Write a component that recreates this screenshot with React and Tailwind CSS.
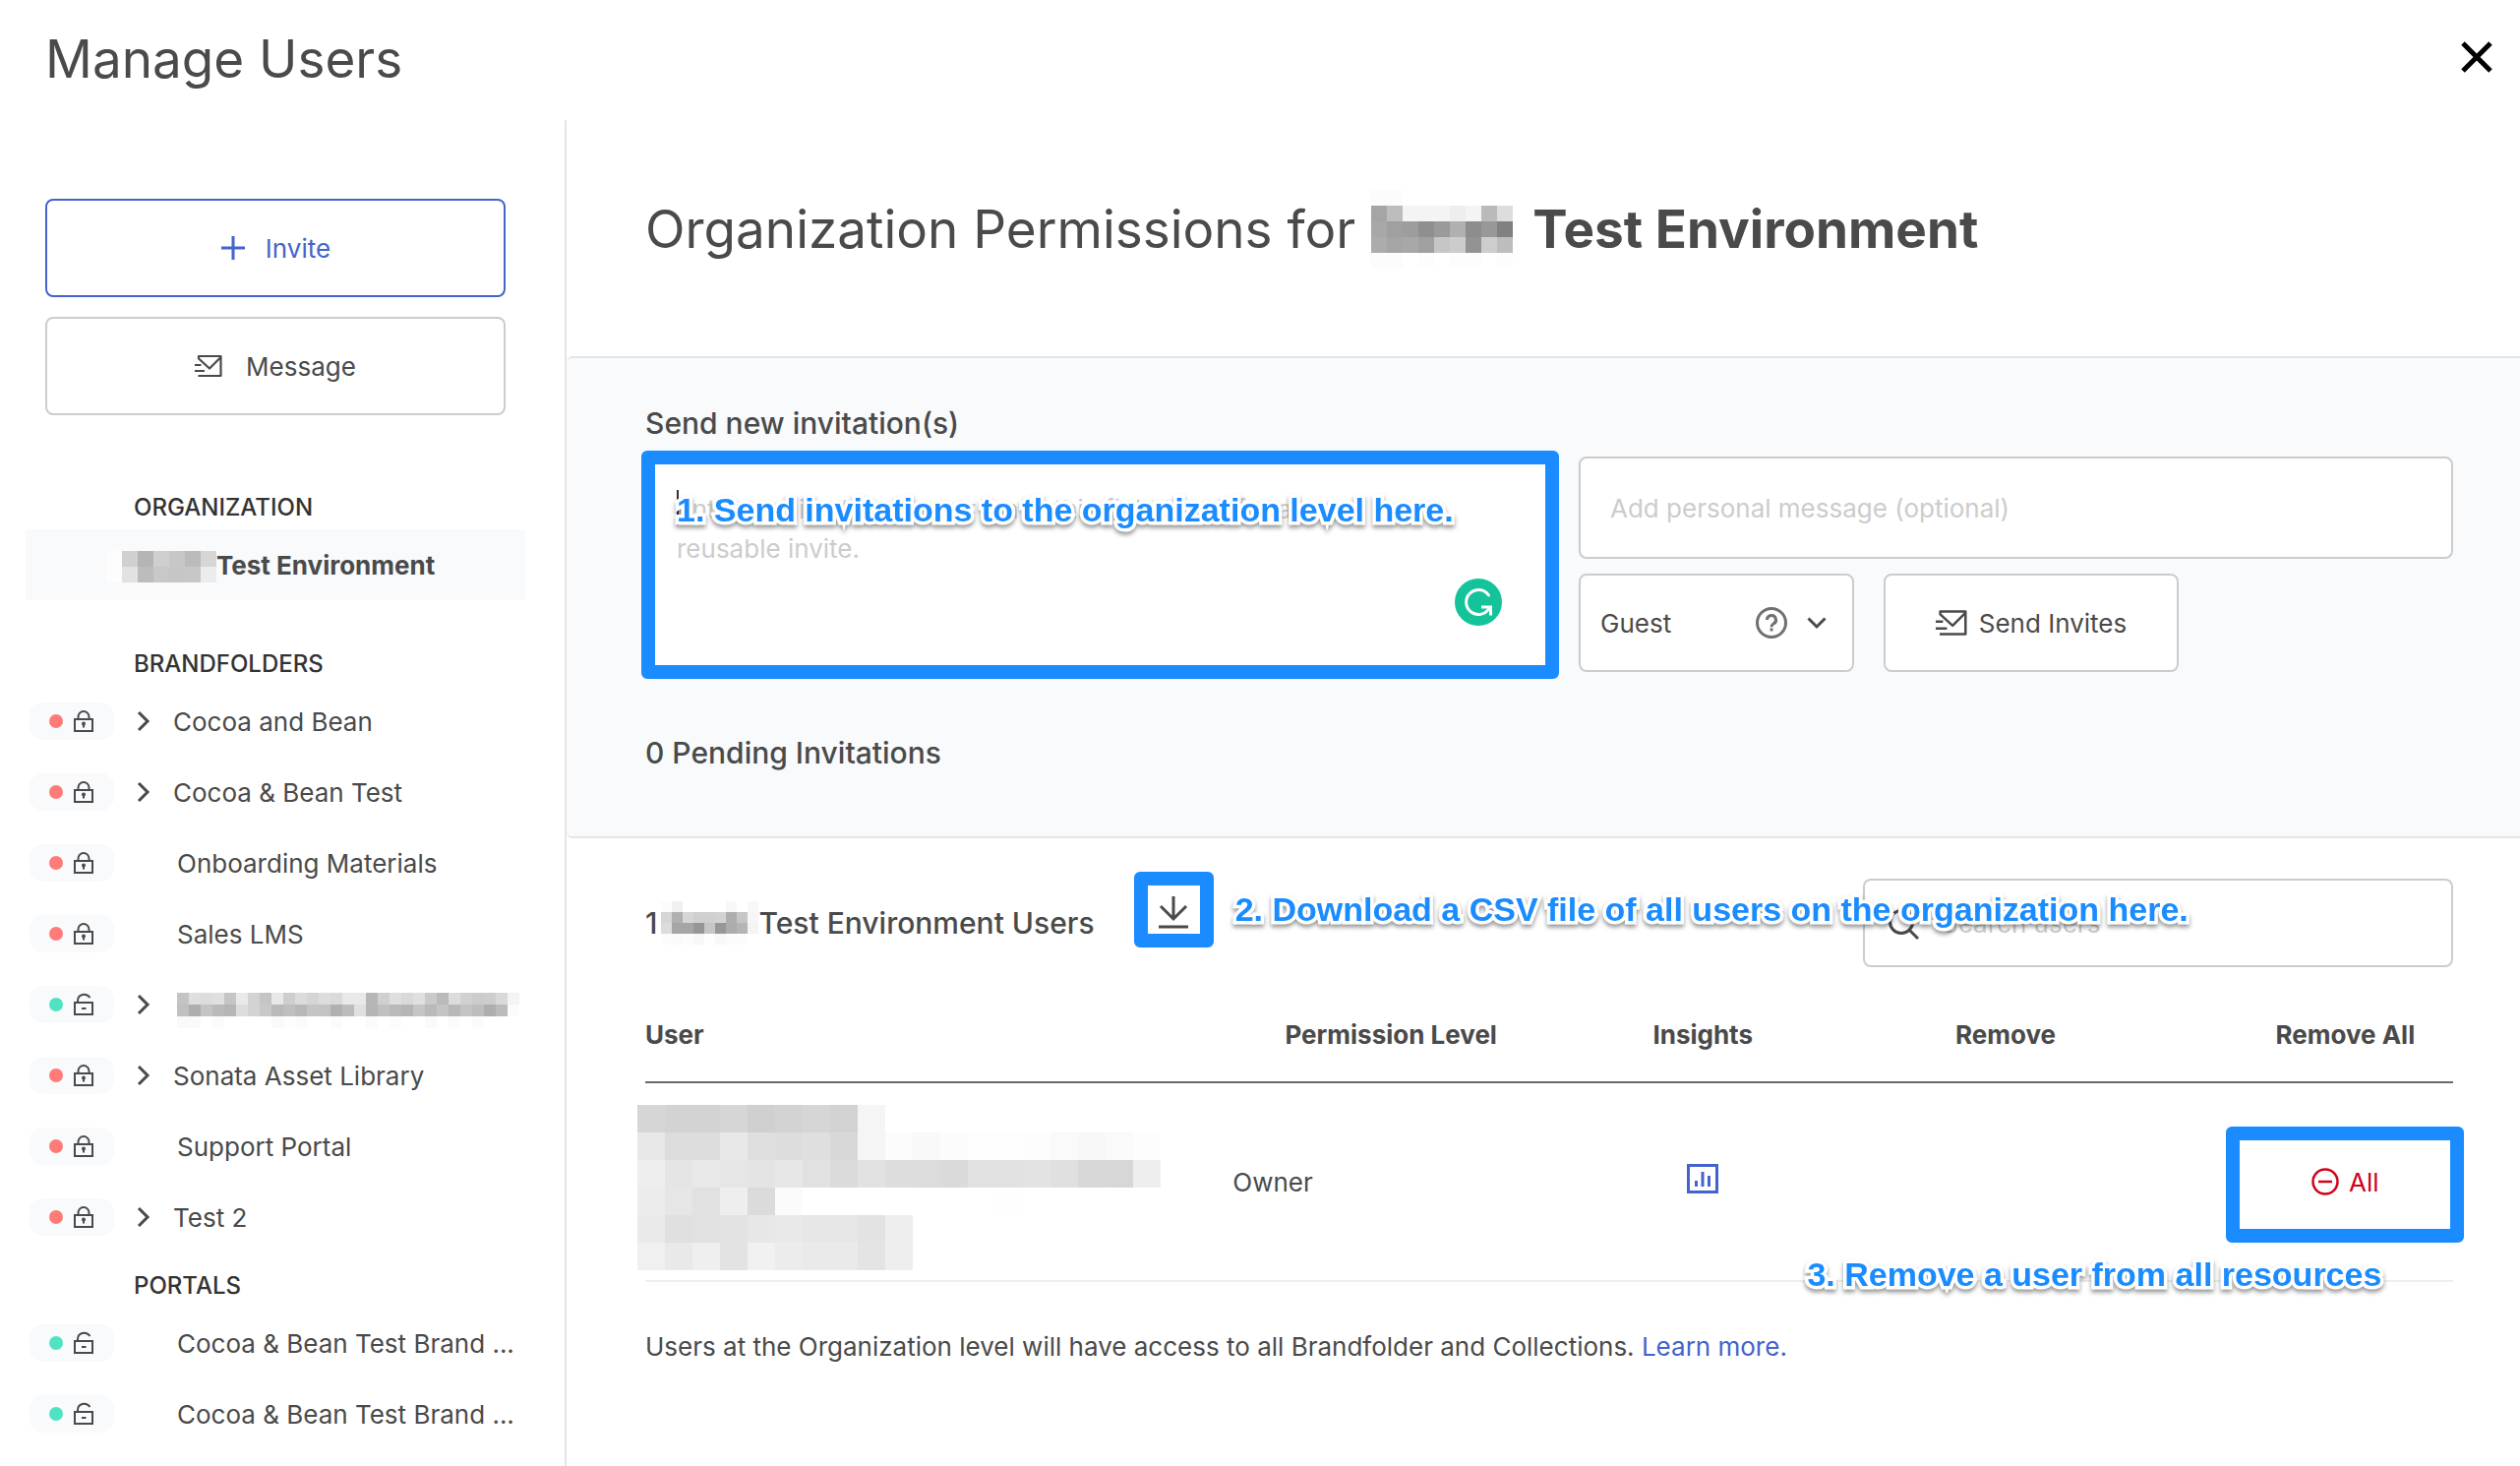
const brandfolders = [
  { name: "Cocoa and Bean", expandable: true },
  { name: "Cocoa & Bean Test", expandable: true },
  { name: "Onboarding Materials" },
  { name: "Sales LMS" },
  { redacted: true, open: true, expandable: true },
  { name: "Sonata Asset Library", expandable: true },
  { name: "Support Portal" },
  { name: "Test 2", expandable: true },
];

const portals = [
  { name: "Cocoa & Bean Test Brand ...", open: true },
  { name: "Cocoa & Bean Test Brand ...", open: true },
];

// one pair of hex digits per cell, used as a gray level
const mosaics = {
  title: [
    "fc fc ff ff ff ff ff ff ff",
    "a5 bd f4 f4 f4 ee f4 ba dd",
    "a8 a0 9d 8f 9a b0 8d 98 80",
    "ac a5 a8 a0 c6 cc 93 cd bd",
    "fc fc ff fd ff fd fd ff fd",
  ],
  org: ["fd d0 b5 cf c7 bb d6", "fd e2 bc c8 c6 c7 ec"],
  folder: [
    "c4 df dd e0 c5 e9 d3 c5 e8 ce dc d5 dd da e9 e9 b6 d0 df d9 e0 ca ba dc d1 cc cd d9 f4",
    "c0 ae c4 ba b6 dd d3 c8 b9 bf b8 c4 c3 b0 bc e0 b5 c0 b9 b5 c5 ba c4 b8 c3 bd ae bb fb",
    "fa fa ff fb ff ff ff ff fa fd fb ff ff fb ff ff fb ff fc ff ff fa ff fb ff fb ff ff ff",
  ],
  users: [
    "fc f0 ff ff ff ff f8 ff f8",
    "d6 b0 d6 cf d0 d2 ae c6 f6",
    "dc a6 a5 96 c6 97 ac b5 f4",
    "fc fa fc f8 ff f8 fc fc ff",
  ],
  user: [
    "d6 d3 d3 d6 d0 d3 d6 d3 f5 ff ff ff ff ff ff ff ff ff ff",
    "e8 dc dc e8 df dd df d8 f5 fc f9 fc fe fe fd fa f8 fa fd",
    "ee e5 e9 e6 e4 e7 e1 db e2 dd dc da e2 e1 e3 e0 d8 d7 ee",
    "ec e6 e1 ee db fb ff ff ff ff ff ff ff fe ff ff ff ff ff",
    "ea e0 e1 e3 e7 e9 e7 e7 e3 ee ff ff ff ff ff ff ff ff ff",
    "f0 e9 ef e3 f1 ec ea ea e4 ee ff ff ff ff ff ff ff ff ff",
  ],
};

function Mosaic({ name, cell, className }) {
  const rows = mosaics[name].map((row) => row.split(" "));
  const width = rows[0].length * cell;
  const height = rows.length * cell;

  return (
    <svg
      className={className}
      width={width}
      height={height}
      viewBox={`0 0 ${width} ${height}`}
      shapeRendering="crispEdges"
      aria-hidden="true"
    >
      {rows.map((row, y) =>
        row.map((level, x) => (
          <rect
            key={`${x}-${y}`}
            x={x * cell}
            y={y * cell}
            width={cell}
            height={cell}
            fill={level === "ff" ? "none" : `#${level}${level}${level}`}
          />
        ))
      )}
    </svg>
  );
}

function LockIcon({ open }) {
  return (
    <svg width="20" height="24" viewBox="0 0 20 24" fill="none" stroke="#4a4a4a" strokeWidth="2" aria-hidden="true">
      <rect x="1" y="10" width="18" height="12" />
      {open ? (
        <>
          <path d="M4 10V8C4 1.500 12.500 -0.500 16.500 5" />
          <path d="M8 16h4.500" />
        </>
      ) : (
        <>
          <path d="M4.500 10V7.500a5.500 5.500 0 0 1 11 0V10" />
          <circle cx="10" cy="14.500" r="1" />
          <path d="M10 15v3.500" />
        </>
      )}
    </svg>
  );
}

function SendIcon({ size = 28 }) {
  return (
    <svg width={size} height={size} viewBox="0 0 28 28" fill="none" stroke="#4a4a4a" strokeWidth="2.200" aria-hidden="true">
      <path d="M3.500 24H26.500V4H4V6.500L15 16.500L26 5.500" strokeLinejoin="round" />
      <path d="M0 13h6.500M0 19h10" />
    </svg>
  );
}

function ResourceItem({ item }) {
  return (
    <li className="flex h-[72px] items-center pl-1">
      <span className="flex h-[38px] w-[86px] shrink-0 items-center gap-[11px] rounded-[14px] bg-[#f8fafc] pl-5">
        <span className={item.open ? "size-[14px] rounded-full bg-[#50e3c2]" : "size-[14px] rounded-full bg-[#ff7b78]"} />
        <LockIcon open={item.open} />
      </span>
      {item.expandable ? (
        <button type="button" aria-label="Expand" className="ml-[22px] w-[38px] shrink-0">
          <svg width="16" height="24" viewBox="0 0 16 24" fill="none" stroke="#4a4a4a" strokeWidth="3">
            <path d="M3 3l9 9l-9 9" />
          </svg>
        </button>
      ) : (
        <span className="w-16 shrink-0" />
      )}
      <a href="#resource" className="whitespace-nowrap">
        {item.redacted ? <Mosaic name="folder" cell={12} className="mt-3 ml-1" /> : item.name}
      </a>
    </li>
  );
}

function GroupTitle({ children }) {
  return <h3 className="pt-[18px] pb-1.5 pl-[110px] text-[24px] leading-8 font-medium text-[#333]">{children}</h3>;
}

function Sidebar() {
  return (
    <aside className="w-[576px] shrink-0 border-r-2 border-[#e4e5e6] pt-20">
      <div className="flex flex-col gap-5 pr-[60px] pl-[46px]">
        <button type="button" className="flex h-[100px] items-center justify-center gap-5 rounded-lg border-2 border-[#4463cc] text-[#4463cc]">
          <svg width="26" height="26" viewBox="0 0 26 26" stroke="currentColor" strokeWidth="3" aria-hidden="true">
            <path d="M13 1v24M1 13h24" />
          </svg>
          Invite
        </button>
        <button type="button" className="flex h-[100px] items-center justify-center gap-6 rounded-lg border-2 border-[#ccc]">
          <SendIcon />
          Message
        </button>
      </div>

      <nav className="mt-[60px] pr-10 pl-[26px]">
        <GroupTitle>ORGANIZATION</GroupTitle>
        <a href="#organization" className="flex h-[72px] items-center bg-[#f8fafc] pl-[82px] font-bold">
          <Mosaic name="org" cell={16} className="mt-1 shrink-0" />
          Test Environment
        </a>
        <div className="mt-[31px]">
          <GroupTitle>BRANDFOLDERS</GroupTitle>
          <ul>
            {brandfolders.map((item, i) => (
              <ResourceItem key={i} item={item} />
            ))}
          </ul>
        </div>
        <GroupTitle>PORTALS</GroupTitle>
        <ul>
          {portals.map((item, i) => (
            <ResourceItem key={i} item={item} />
          ))}
        </ul>
      </nav>
    </aside>
  );
}

// tutorial mark-up drawn over the page
function Frame({ className }) {
  return <span className={`pointer-events-none absolute rounded-md border-[14px] border-[#1a8cff] ${className}`} />;
}

function Note({ className, children }) {
  return (
    <span
      className={`pointer-events-none absolute z-10 font-['Liberation_Sans',Arial,sans-serif] text-[34px] leading-10 font-bold whitespace-nowrap text-[#1a8cff] drop-shadow-[0_3px_2px_rgba(0,0,0,0.4)] [-webkit-text-stroke:7px_white] [paint-order:stroke_fill] ${className}`}
    >
      {children}
    </span>
  );
}

function InviteSection() {
  return (
    <section className="rounded-l-md border-y-2 border-[#e4e5e6] bg-[#f8fafc] pt-[46px] pr-[68px] pb-[65px] pl-20">
      <label htmlFor="emails" className="block text-[30px] leading-10 font-medium">
        Send new invitation(s)
      </label>
      <div className="mt-[14px] grid grid-cols-[925fr_889fr] gap-6">
        <div className="relative">
          <textarea
            id="emails"
            placeholder="Enter email addresses or leave this field blank for a reusable invite."
            className="block h-[220px] w-full resize-none rounded-lg border-2 border-[#ccc] bg-white py-8 pr-40 pl-[30px] leading-10 placeholder:text-[#ccc]"
          />
          <Frame className="-inset-x-1 -inset-y-1.5" />
          <span className="absolute top-[34px] left-8 h-9 w-0.5 bg-[#333]" />
          <Note className="top-[34px] left-8">1. Send invitations to the organization level here.</Note>
          <svg className="absolute right-[54px] bottom-12" width="48" height="48" viewBox="0 0 48 48" fill="none" aria-hidden="true">
            <circle cx="24" cy="24" r="24" fill="#15c39a" />
            <path d="M34.500 17A12.500 12.500 0 1 0 34.500 31" stroke="#fff" strokeWidth="3" strokeLinecap="round" />
            <path d="M27 29H36.500V37.500" stroke="#fff" strokeWidth="3" />
          </svg>
        </div>

        <div className="flex flex-col gap-[15px]">
          <input
            type="text"
            aria-label="Personal message"
            placeholder="Add personal message (optional)"
            className="h-[104px] rounded-lg border-2 border-[#ccc] bg-white px-[30px] placeholder:text-[#ccc]"
          />
          <div className="flex gap-[30px]">
            <div className="relative w-[280px]">
              <select aria-label="Permission level" className="h-[100px] w-full appearance-none rounded-lg border-2 border-[#ccc] bg-white px-5">
                <option>Guest</option>
                <option>Collaborator</option>
                <option>Admin</option>
                <option>Owner</option>
              </select>
              <div className="pointer-events-none absolute inset-y-0 right-7 flex items-center gap-5">
                <svg width="32" height="32" viewBox="0 0 32 32" fill="none" stroke="#707070" strokeWidth="3" aria-hidden="true">
                  <circle cx="16" cy="16" r="14.500" />
                  <path d="M11.500 13a4.500 4.500 0 1 1 6.500 4c-1.500 .800 -2 1.500 -2 3.300" />
                  <path d="M16 21.500v3" />
                </svg>
                <svg width="20" height="14" viewBox="0 0 20 14" fill="none" stroke="#4a4a4a" strokeWidth="3" aria-hidden="true">
                  <path d="M1.500 2.500l8.500 8.500l8.500 -8.500" />
                </svg>
              </div>
            </div>
            <button type="button" className="flex h-[100px] w-[300px] items-center justify-center gap-3 rounded-lg border-2 border-[#ccc] bg-white">
              <SendIcon size={32} />
              Send Invites
            </button>
          </div>
        </div>
      </div>
      <h2 className="mt-[61px] text-[30px] leading-10 font-medium">0 Pending Invitations</h2>
    </section>
  );
}

function UsersSection() {
  return (
    <section className="pt-[41px] pr-[68px] pl-20">
      <div className="flex h-[90px] items-center">
        <h2 className="flex items-center text-[30px] leading-10 font-medium">
          1
          <Mosaic name="users" cell={11} className="ml-1 shrink-0" />
          Test Environment Users
        </h2>
        <div className="relative mb-[27px] ml-10">
          <button type="button" aria-label="Download CSV" className="flex h-[77px] w-[81px] items-center justify-center pt-1">
            <svg width="32" height="34" viewBox="0 0 32 34" fill="none" stroke="#4a4a4a" strokeWidth="3">
              <path d="M16 1v22M3 11l13 13l13 -13M1 32h30" />
            </svg>
          </button>
          <Frame className="inset-0" />
          <Note className="top-[18px] left-full ml-[22px]">2. Download a CSV file of all users on the organization here.</Note>
        </div>
        <div className="relative ml-auto w-[600px]">
          <svg className="absolute top-[29px] left-[26px]" width="32" height="34" viewBox="0 0 32 34" fill="none" stroke="#4a4a4a" strokeWidth="3" aria-hidden="true">
            <circle cx="13" cy="15" r="11.500" />
            <path d="M21 23l9 9" />
          </svg>
          <input
            type="search"
            aria-label="Search users"
            placeholder="Search users"
            className="h-[90px] w-full rounded-lg border-2 border-[#ccc] bg-transparent pr-6 pl-[78px] placeholder:text-[#ccc]"
          />
        </div>
      </div>

      <table className="mt-[49px] w-full table-fixed border-collapse">
        <thead>
          <tr className="border-b-2 border-[#6a6a6a] leading-10">
            <th className="w-[32.5%] pb-[27px] text-left font-bold">User</th>
            <th className="w-[17.5%] pb-[27px] font-bold">Permission Level</th>
            <th className="w-[17%] pb-[27px] font-bold">Insights</th>
            <th className="w-[16.5%] pb-[27px] font-bold">Remove</th>
            <th className="w-[16.5%] pb-[27px] pl-21 font-bold">Remove All</th>
          </tr>
        </thead>
        <tbody>
          <tr className="h-[202px] border-b-2 border-[#eee]">
            <td>
              <Mosaic name="user" cell={28} className="-ml-2 mt-3" />
            </td>
            <td>Owner</td>
            <td>
              <a href="#insights" aria-label="Insights" className="flex justify-center pb-1.5">
                <svg width="32" height="30" viewBox="0 0 32 30" fill="none" stroke="#4463cc" strokeWidth="3">
                  <path d="M1.500 1.500h29v27h-29z" />
                  <path d="M9.500 17v6M16 8v15M22.500 12v11" />
                </svg>
              </a>
            </td>
            <td />
            <td className="pl-21">
              <div className="relative mx-auto w-[214px]">
                <button type="button" className="flex h-[100px] w-full items-center justify-center gap-2.5 rounded-lg text-[#d0021b]">
                  <svg width="28" height="28" viewBox="0 0 28 28" fill="none" stroke="currentColor" strokeWidth="2.500" aria-hidden="true">
                    <circle cx="14" cy="14" r="12.500" />
                    <path d="M7 14h14" />
                  </svg>
                  All
                </button>
                <Frame className="-inset-x-[14px] -top-1.5 -bottom-3" />
                <Note className="top-full right-[70px] mt-6">3. Remove a user from all resources</Note>
              </div>
            </td>
          </tr>
        </tbody>
      </table>

      <p className="mt-[46px] leading-10">
        Users at the Organization level will have access to all Brandfolder and Collections.{" "}
        <a href="#learn-more" className="text-[#4463cc]">
          Learn more.
        </a>
      </p>
    </section>
  );
}

export default function App() {
  return (
    <div className="flex min-h-screen flex-col bg-white font-['Inter',sans-serif] text-[26px] text-[#4a4a4a]">
      <header className="flex h-[122px] items-start justify-between pt-7 pr-7 pl-[46px]">
        <h1 className="text-[53px] leading-16">Manage Users</h1>
        <button type="button" aria-label="Close" className="pt-3.5">
          <svg width="32" height="32" viewBox="0 0 32 32" stroke="#000" strokeWidth="5">
            <path d="M2 2l28 28M30 2l-28 28" />
          </svg>
        </button>
      </header>
      <div className="flex flex-1">
        <Sidebar />
        <main className="min-w-0 flex-1">
          <h2 className="mt-[79px] mb-[97px] flex h-16 items-center pl-20 text-[53px] leading-16">
            Organization Permissions for
            <Mosaic name="title" cell={16} className="mr-5 ml-4 shrink-0" />
            <strong className="font-bold">Test Environment</strong>
          </h2>
          <InviteSection />
          <UsersSection />
        </main>
      </div>
    </div>
  );
}
